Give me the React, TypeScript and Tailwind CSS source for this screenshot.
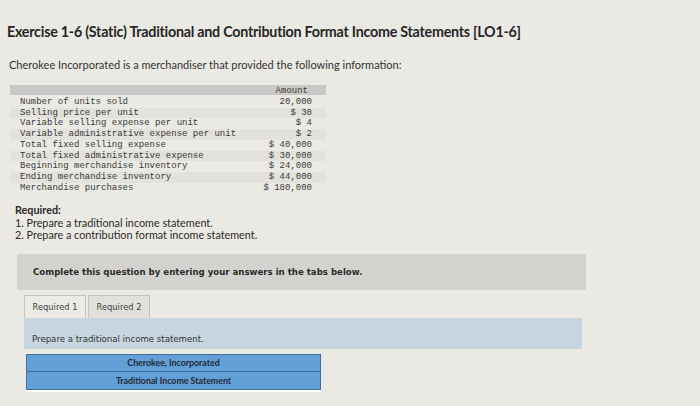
import React from "react";

const rows: [string, string][] = [
  ["Number of units sold", "20,000"],
  ["Selling price per unit", "$ 30"],
  ["Variable selling expense per unit", "$ 4"],
  ["Variable administrative expense per unit", "$ 2"],
  ["Total fixed selling expense", "$ 40,000"],
  ["Total fixed administrative expense", "$ 30,000"],
  ["Beginning merchandise inventory", "$ 24,000"],
  ["Ending merchandise inventory", "$ 44,000"],
  ["Merchandise purchases", "$ 180,000"],
];

export default function App() {
  return (
    <div className="w-[700px] h-[406px] overflow-hidden bg-[#eae9e4] text-[#2a2a2a] font-['Lato',sans-serif] relative">
      {/* title */}
      <h1 className="absolute left-[7px] top-[21px] text-[14.3px] font-bold tracking-[-0.25px] text-[#262626] whitespace-nowrap">
        Exercise 1-6 (Static) Traditional and Contribution Format Income Statements [LO1-6]
      </h1>
      <div className="pt-[58px] pl-[9px]">
        <p className="text-[11px] text-[#333] leading-[14px]">
          Cherokee Incorporated is a merchandiser that provided the following information:
        </p>

        {/* data table */}
        <div className="mt-[13px] ml-[1px] w-[316px] font-['Liberation_Mono',monospace] text-[9px] leading-[10.7px] text-[#3a3a3a]">
          <div className="h-[10px] bg-[#c9c8c6] flex justify-end pr-[18px] mb-[2px]">
            <span className="leading-[10px] translate-y-[1px]">Amount</span>
          </div>
          {rows.map(([label, val], i) => (
            <div
              key={label}
              className={`flex justify-between pl-[10px] pr-[14px] ${i % 2 === 1 ? "bg-[#e2e1dc]" : ""}`}
            >
              <span>{label}</span>
              <span>{val}</span>
            </div>
          ))}
        </div>

        {/* required */}
        <div className="mt-[11px] ml-[6px] text-[10.8px] leading-[12.5px] text-[#2a2a2a]">
          <p className="font-bold">Required:</p>
          <p>1. Prepare a traditional income statement.</p>
          <p>2. Prepare a contribution format income statement.</p>
        </div>
      </div>

      {/* answer area */}
      <div className="absolute left-[17px] top-[254px] w-[569px] font-['DejaVu_Sans',sans-serif]">
        <div className="h-[36px] bg-[#d3d2ce] flex items-center pl-[16px] pt-[1px]">
          <span className="text-[8.6px] font-bold text-[#2b2b2b]">
            Complete this question by entering your answers in the tabs below.
          </span>
        </div>
        <div className="flex ml-[7px] mt-[5px] gap-[2px]">
          <div className="w-[62px] h-[23px] border border-b-0 border-[#c4c3bf] bg-[#ebeae5] flex items-center justify-center text-[8.3px] text-[#444]">
            Required 1
          </div>
          <div className="w-[62px] h-[23px] border border-b-0 border-[#c4c3bf] bg-[#e1e0db] flex items-center justify-center text-[8.3px] text-[#444]">
            Required 2
          </div>
        </div>
        <div className="ml-[7px] w-[558px] h-[31px] bg-[#c7d6de] flex items-center pl-[8px] pt-[12px]">
          <span className="text-[8.6px] text-[#333]">Prepare a traditional income statement.</span>
        </div>
        <div className="ml-[9px] mt-[5px] w-[295px] border border-[#3f6f98] bg-[#629fd6] font-['Lato',sans-serif] text-[8.8px] font-bold text-[#1f2a36]">
          <div className="h-[17px] flex items-center justify-center border-b border-[#3f6f98]">
            Cherokee, Incorporated
          </div>
          <div className="h-[17px] flex items-center justify-center">
            Traditional Income Statement
          </div>
        </div>
        <div className="ml-[9px] w-[295px] h-[2px] bg-white" />
      </div>
    </div>
  );
}
